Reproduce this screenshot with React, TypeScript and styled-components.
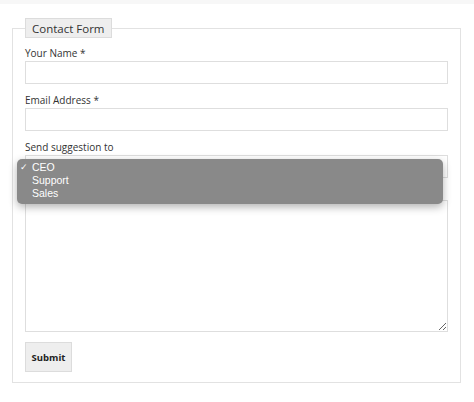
import styled, { createGlobalStyle } from "styled-components"

const GlobalStyle = createGlobalStyle`
  html, body {
    margin: 0;
    padding: 0;
    background: #ffffff;
  }
  * {
    box-sizing: border-box;
  }
`

const recipients = ["CEO", "Support", "Sales"]

export default function App() {
  return (
    <Page>
      <GlobalStyle />
      <Fieldset>
        <Legend>Contact Form</Legend>

        <Field>
          <Label>Your Name *</Label>
          <Input type="text" />
        </Field>

        <Field>
          <Label>Email Address *</Label>
          <Input type="email" />
        </Field>

        <Field>
          <Label>Send suggestion to</Label>
          <SelectWrap>
            <Select defaultValue="CEO">
              {recipients.map((r) => (
                <option key={r}>{r}</option>
              ))}
            </Select>
            <Menu>
              {recipients.map((r, i) => (
                <MenuItem key={r}>
                  <Check>{i === 0 ? "✓" : ""}</Check>
                  {r}
                </MenuItem>
              ))}
            </Menu>
          </SelectWrap>
        </Field>

        <TextArea aria-label="Suggestion" />

        <SubmitButton type="button">Submit</SubmitButton>
      </Fieldset>
    </Page>
  )
}

const Page = styled.div`
  width: 474px;
  min-height: 402px;
  border-top: 4px solid #f7f7f7;
  padding: 14px 13px 0 12px;
  font-family: "Open Sans", "Liberation Sans", sans-serif;
  color: #333333;
`

const Fieldset = styled.fieldset`
  margin: 0;
  padding: 8px 12px 10px 12px;
  border: 1px solid #e2e2e2;
  display: flex;
  flex-direction: column;
  min-width: 0;
`

const Legend = styled.legend`
  margin-left: 0;
  padding: 0 6px;
  height: 20px;
  line-height: 19px;
  font-size: 11.5px;
  color: #333333;
  background: #eeeeee;
  border: 1px solid #dcdcdc;
`

const Field = styled.div`
  display: flex;
  flex-direction: column;
  margin-bottom: 9px;
`

const Label = styled.label`
  font-size: 10px;
  line-height: 15px;
  color: #333333;
`

const Input = styled.input`
  height: 23px;
  width: 100%;
  border: 1px solid #dedede;
  background: #ffffff;
  margin: 0;
  padding: 0 6px;
  font: inherit;
`

const SelectWrap = styled.div`
  position: relative;
`

const Select = styled.select`
  appearance: none;
  display: block;
  height: 23px;
  width: 100%;
  border: 1px solid #dedede;
  background: #ffffff;
  margin: 0;
  padding: 0 6px;
  font: inherit;
  font-size: 10px;
`

const Menu = styled.div`
  position: absolute;
  left: -8px;
  top: 4px;
  width: 426px;
  height: 45px;
  padding: 2px 0 0 3px;
  background: #898989;
  border-radius: 5px;
  box-shadow: 0 3px 8px rgba(0, 0, 0, 0.3);
  font-family: "Liberation Sans", Arial, sans-serif;
  font-size: 10.5px;
  color: #ffffff;
  z-index: 2;
`

const MenuItem = styled.div`
  display: flex;
  align-items: center;
  height: 13px;
  line-height: 13px;
`

const Check = styled.span`
  width: 12px;
  font-family: "DejaVu Sans", sans-serif;
  font-size: 9px;
`

const TextArea = styled.textarea`
  display: block;
  width: 100%;
  height: 132px;
  margin: 13px 0 0;
  border: 1px solid #dedede;
  background: #ffffff;
  font: inherit;
  resize: both;
`

const SubmitButton = styled.button`
  align-self: flex-start;
  margin-top: 10px;
  width: 47px;
  height: 30px;
  padding: 0;
  background: #eeeeee;
  border: 1px solid #dcdcdc;
  font-family: "Open Sans", "Liberation Sans", sans-serif;
  font-weight: 700;
  font-size: 9.5px;
  color: #222222;
`
